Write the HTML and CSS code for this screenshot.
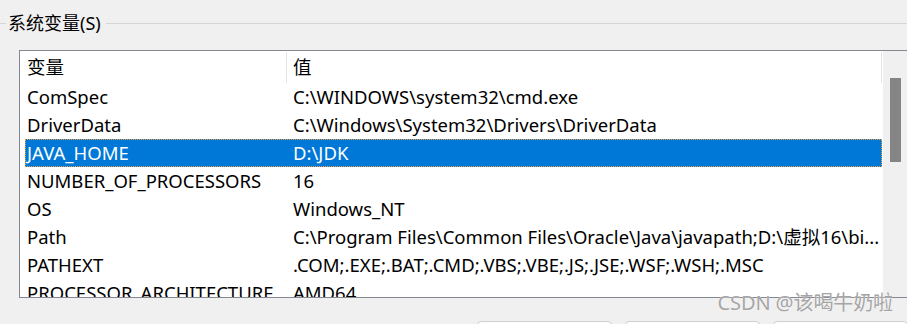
FILE: index.html
```html
<!DOCTYPE html>
<html lang="zh-CN">

<head>
  <meta charset="UTF-8" />
  <meta name="viewport" content="width=device-width, initial-scale=1.0" />
  <title>系统变量</title>
  <link rel="stylesheet" href="styles.css">
</head>

<body>
  <div class="group-title">
    <span class="title-text">系统变量(S)</span>
    <span class="title-line"></span>
  </div>

  <div class="listbox">
    <div class="list-area">
      <div class="row header">
        <div class="cell name">变量</div>
        <div class="cell value">值</div>
      </div>
      <div class="row">
        <div class="cell name">ComSpec</div>
        <div class="cell value">C:\WINDOWS\system32\cmd.exe</div>
      </div>
      <div class="row">
        <div class="cell name">DriverData</div>
        <div class="cell value">C:\Windows\System32\Drivers\DriverData</div>
      </div>
      <div class="row selected">
        <div class="cell name">JAVA_HOME</div>
        <div class="cell value">D:\JDK</div>
      </div>
      <div class="row">
        <div class="cell name">NUMBER_OF_PROCESSORS</div>
        <div class="cell value">16</div>
      </div>
      <div class="row">
        <div class="cell name">OS</div>
        <div class="cell value">Windows_NT</div>
      </div>
      <div class="row">
        <div class="cell name">Path</div>
        <div class="cell value">C:\Program Files\Common Files\Oracle\Java\javapath;D:\虚拟16\bi...</div>
      </div>
      <div class="row">
        <div class="cell name">PATHEXT</div>
        <div class="cell value">.COM;.EXE;.BAT;.CMD;.VBS;.VBE;.JS;.JSE;.WSF;.WSH;.MSC</div>
      </div>
      <div class="row">
        <div class="cell name">PROCESSOR_ARCHITECTURE</div>
        <div class="cell value">AMD64</div>
      </div>
    </div>
    <div class="scrollbar">
      <div class="thumb"></div>
    </div>
  </div>

  <div class="buttons">
    <div class="btn"></div>
    <div class="btn"></div>
    <div class="btn"></div>
  </div>

  <div class="watermark">CSDN @该喝牛奶啦</div>
</body>

</html>
```

FILE: styles.css
```css
/* General */
html {
  overflow: hidden;
}

body {
  margin: 0;
  width: 907px;
  height: 324px;
  overflow: hidden;
  position: relative;
  background: #f0f0f0;
  font-family: "Noto Sans", "Noto Sans CJK SC", sans-serif;
  font-size: 18px;
  color: #000;
}

/* Group title */
.group-title {
  display: flex;
  align-items: center;
  height: 24px;
  padding-top: 11px;
}

.group-title::before {
  content: "";
  width: 6px;
  border-top: 1px solid #d5d5d5;
}

.title-text {
  padding: 0 5px 0 2px;
  line-height: 24px;
}

.title-line {
  flex: 1;
  border-top: 1px solid #d5d5d5;
}

/* List box */
.listbox {
  display: flex;
  margin: 15px 0 0 19px;
  width: 893px;
  height: 246px;
  border: 1px solid #828790;
  background: #fff;
  overflow: hidden;
}

.list-area {
  width: 857px;
  padding: 0 1px 0 5px;
  overflow: hidden;
  font-size: 18.5px;
}

.row {
  display: flex;
  height: 28px;
  line-height: 27px;
  white-space: nowrap;
}

.row.header {
  height: 32px;
  line-height: 32px;
}

.cell.name {
  width: 259px;
  padding-left: 2px;
  flex-shrink: 0;
}

.cell.value {
  flex: 1;
  padding-left: 7px;
  overflow: hidden;
}

.header .cell.value {
  border-left: 1px solid #e5e5e5;
  border-right: 1px solid #e5e5e5;
  margin: 1px 0 0;
  line-height: 30px;
  padding-left: 6px;
}

.row.selected {
  background: #0078d7;
  color: #fff;
  outline: 1px dotted #f0a040;
  outline-offset: -1px;
}

/* Scrollbar */
.scrollbar {
  flex: 1;
  background: #f0f0f0;
  padding: 27px 0 0 7px;
}

.thumb {
  width: 11px;
  height: 84px;
  background: #858585;
}

/* Bottom buttons */
.buttons {
  display: flex;
  gap: 13px;
  margin: 23px 0 0 477px;
  height: 2px;
}

.btn {
  width: 133px;
  height: 30px;
  border: 1px solid #d0d0d0;
  border-radius: 4px;
  background: #fdfdfd;
  flex-shrink: 0;
}

/* Watermark */
.watermark {
  position: absolute;
  right: 14px;
  top: 287px;
  font-size: 20px;
  color: #a5a5a5;
  text-shadow: 0 0 1px #fff;
  letter-spacing: -0.1px;
}
```
